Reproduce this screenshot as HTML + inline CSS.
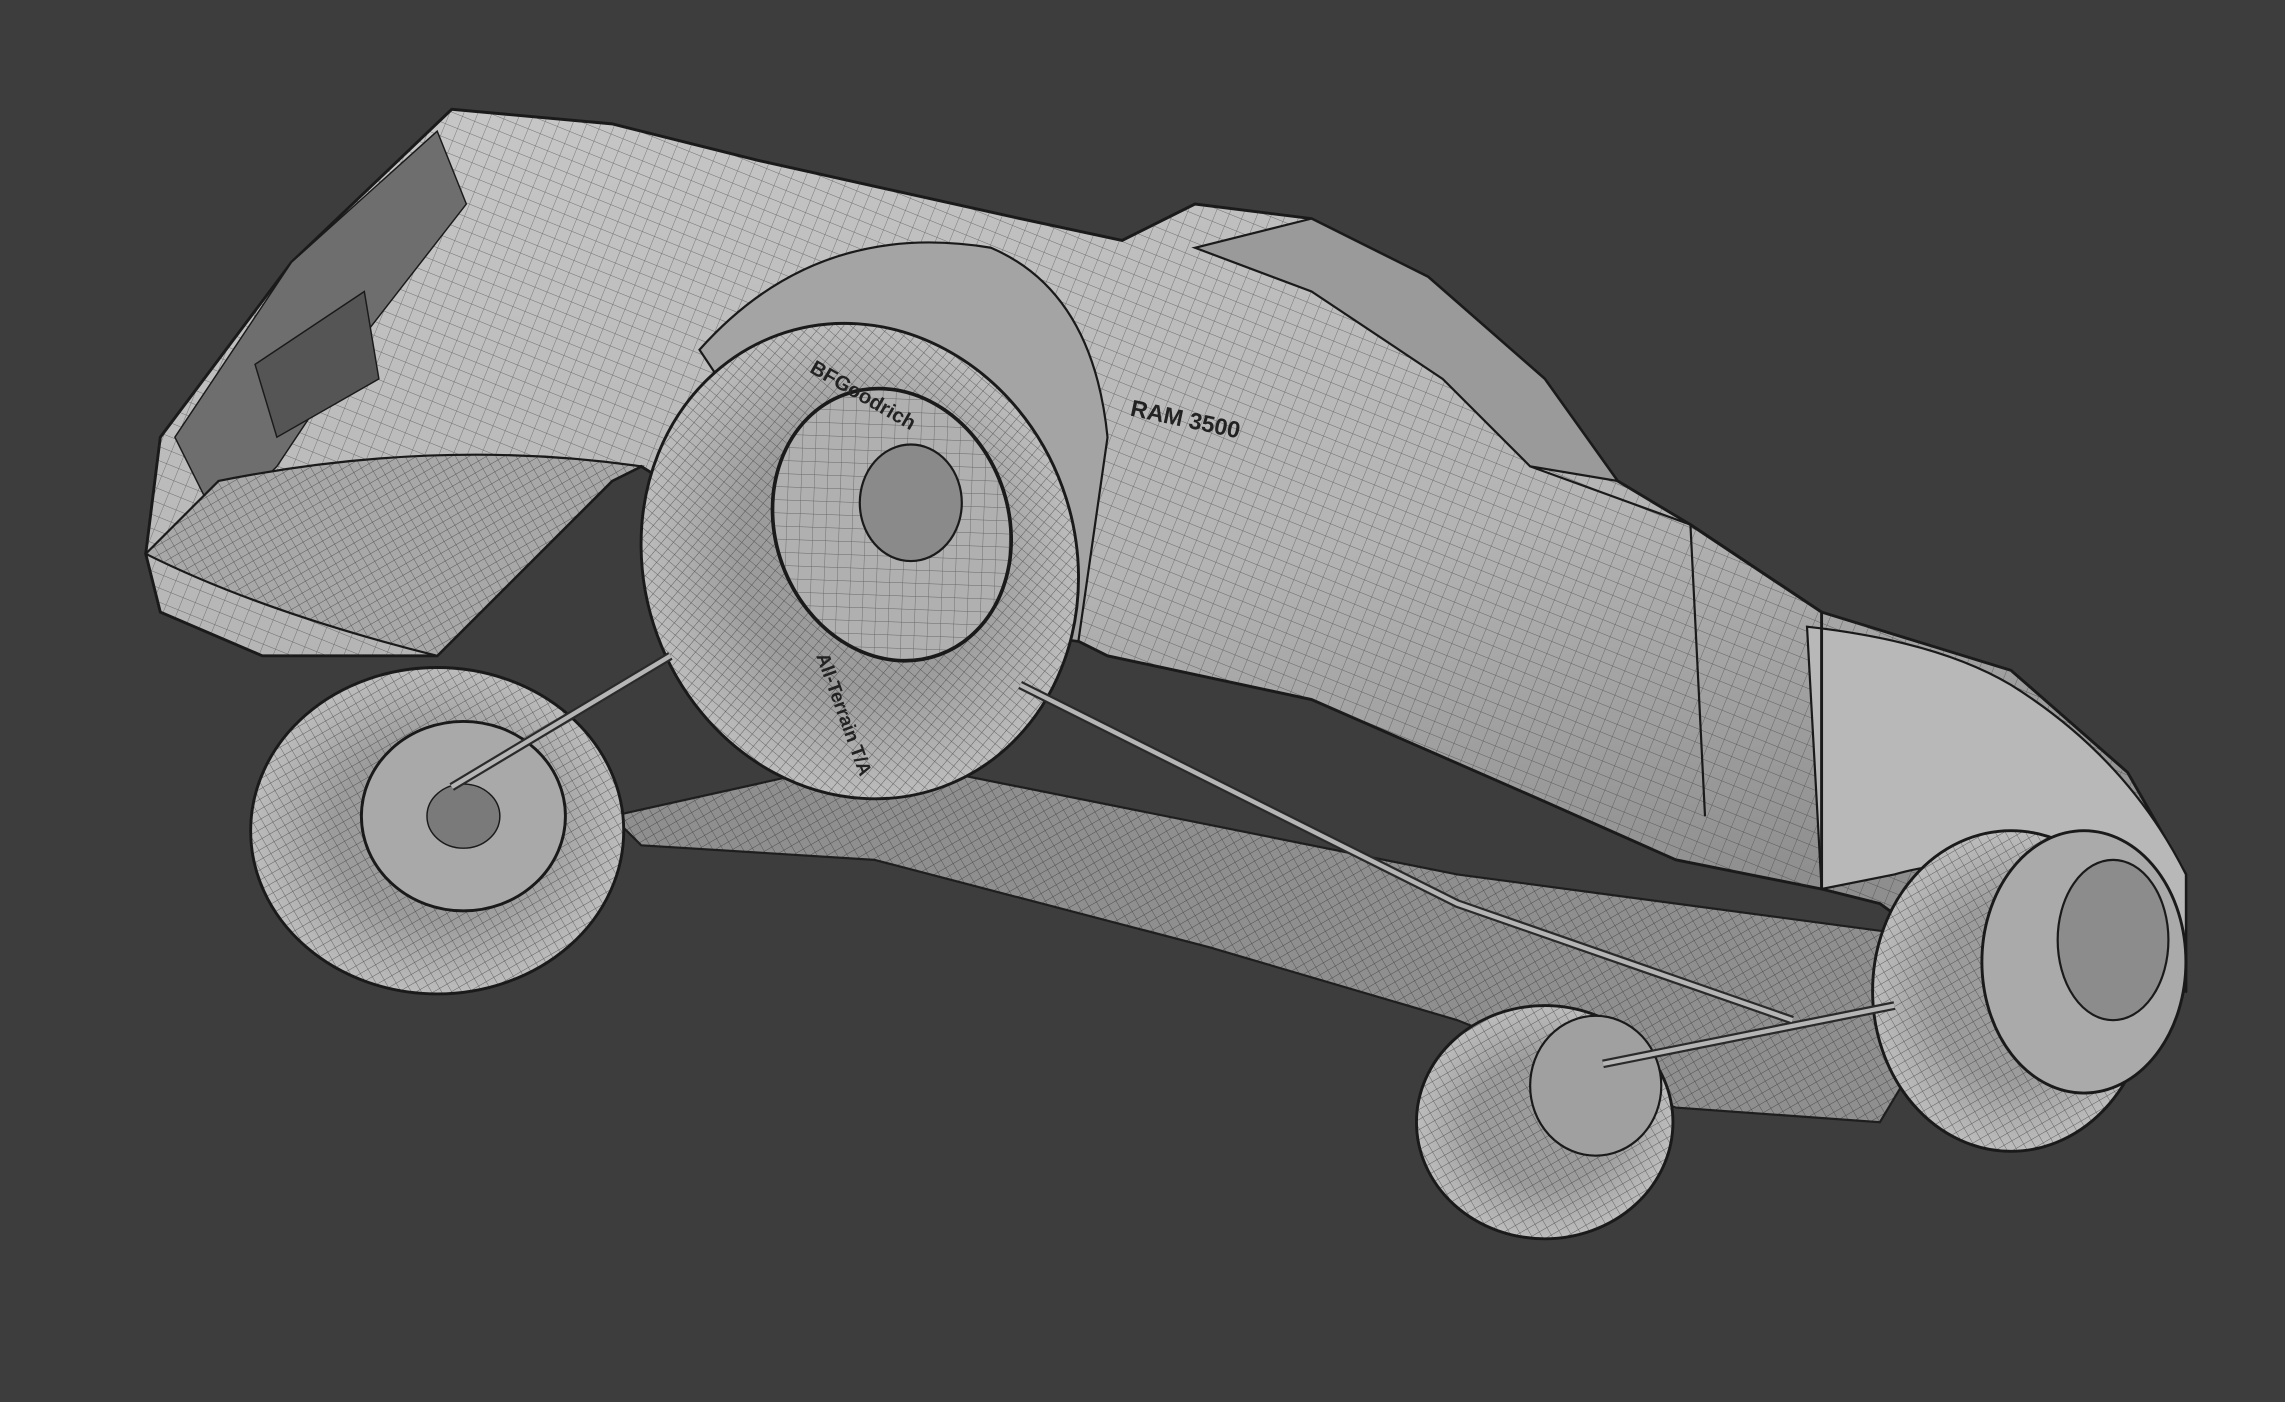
<!DOCTYPE html>
<html><head><meta charset="utf-8"><style>
html,body{margin:0;padding:0;background:#3d3d3d;width:2285px;height:1402px;overflow:hidden}
svg{display:block}
</style></head><body>
<svg width="2285" height="1402" viewBox="0 0 1568 962" preserveAspectRatio="none" xmlns="http://www.w3.org/2000/svg">
<defs>
<pattern id="g" width="9" height="9" patternUnits="userSpaceOnUse" patternTransform="rotate(22)">
<path d="M0 0H9M0 0V9" stroke="#2a2a2a" stroke-width="0.6" fill="none" opacity="0.55"/>
</pattern>
<pattern id="g2" width="6" height="6" patternUnits="userSpaceOnUse" patternTransform="rotate(-30)">
<path d="M0 0H6M0 0V6" stroke="#222" stroke-width="0.6" fill="none" opacity="0.6"/>
</pattern>
<linearGradient id="bd" x1="0" y1="0" x2="0.3" y2="1">
<stop offset="0" stop-color="#c8c8c8"/><stop offset="0.6" stop-color="#b4b4b4"/><stop offset="1" stop-color="#8e8e8e"/>
</linearGradient>
<radialGradient id="tire" cx="0.5" cy="0.5" r="0.5">
<stop offset="0.55" stop-color="#9c9c9c"/><stop offset="1" stop-color="#bdbdbd"/>
</radialGradient>
</defs>
<rect width="1568" height="962" fill="#3d3d3d"/>
<!-- chassis underside -->
<polygon points="420,560 600,520 1000,600 1300,640 1320,720 1290,770 1150,760 1000,700 830,650 600,590 440,580" fill="#8f8f8f" stroke="#1e1e1e" stroke-width="1.5"/>
<polygon points="420,560 600,520 1000,600 1300,640 1320,720 1290,770 1150,760 1000,700 830,650 600,590 440,580" fill="url(#g2)"/>
<!-- body -->
<polygon points="100,380 110,300 200,180 310,75 420,85 520,110 700,150 770,165 820,140 900,150 980,190 1060,260 1110,330 1160,360 1250,420 1380,460 1460,530 1500,600 1500,680 1400,700 1290,620 1250,610 1150,590 1060,550 900,480 760,450 740,440 600,420 440,320 420,330 300,450 180,450 110,420" fill="url(#bd)" stroke="#1a1a1a" stroke-width="2"/>
<polygon points="100,380 110,300 200,180 310,75 420,85 520,110 700,150 770,165 820,140 900,150 980,190 1060,260 1110,330 1160,360 1250,420 1380,460 1460,530 1500,600 1500,680 1400,700 1290,620 1250,610 1150,590 1060,550 900,480 760,450 740,440 600,420 440,320 420,330 300,450 180,450 110,420" fill="url(#g)"/>
<!-- cab windows -->
<polygon points="820,170 900,150 980,190 1060,260 1110,330 1050,320 990,260 900,200" fill="#9a9a9a" stroke="#1a1a1a" stroke-width="1.5"/>
<!-- grille front darker -->
<polygon points="120,300 200,180 300,90 320,140 250,230 190,320 150,360" fill="#6e6e6e" stroke="#1a1a1a"/>
<polygon points="175,250 250,200 260,260 190,300" fill="#555" stroke="#1a1a1a"/>
<!-- bumper -->
<path d="M100,380 Q180,420 300,450 L420,330 L440,320 Q300,300 150,330 Z" fill="#a8a8a8" stroke="#1a1a1a" stroke-width="1.5"/>
<path d="M100,380 Q180,420 300,450 L420,330 L440,320 Q300,300 150,330 Z" fill="url(#g2)"/>
<!-- fender arch -->
<path d="M480,240 Q560,150 680,170 Q750,200 760,300 L740,440 L600,420 Z" fill="#a4a4a4" stroke="#1a1a1a" stroke-width="1.5"/>
<!-- rear fender -->
<path d="M1240,430 Q1330,440 1380,470 Q1460,520 1500,600 L1500,680 L1420,620 Q1370,580 1300,600 L1250,610 Z" fill="#b8b8b8" stroke="#1a1a1a" stroke-width="1.5"/>
<!-- bed line -->
<path d="M1160,360 L1250,420 L1250,610" stroke="#1a1a1a" stroke-width="2" fill="none"/>
<path d="M1050,320 L1160,360 L1170,560" stroke="#1a1a1a" stroke-width="1.5" fill="none"/>
<text x="775" y="285" font-family="Liberation Sans, sans-serif" font-size="16" font-weight="bold" fill="#222" transform="rotate(12 775 285)">RAM 3500</text>
<!-- front-left wheel -->
<ellipse cx="300" cy="570" rx="128" ry="112" fill="url(#tire)" stroke="#1a1a1a" stroke-width="2"/>
<ellipse cx="300" cy="570" rx="128" ry="112" fill="url(#g2)"/>
<ellipse cx="318" cy="560" rx="70" ry="65" fill="#a9a9a9" stroke="#1a1a1a" stroke-width="2"/>
<ellipse cx="318" cy="560" rx="25" ry="22" fill="#7a7a7a" stroke="#1a1a1a"/>
<!-- big front wheel -->
<ellipse cx="590" cy="385" rx="148" ry="165" transform="rotate(-20 590 385)" fill="url(#tire)" stroke="#1a1a1a" stroke-width="2"/>
<ellipse cx="590" cy="385" rx="148" ry="165" transform="rotate(-20 590 385)" fill="url(#g2)"/>
<ellipse cx="612" cy="360" rx="80" ry="95" transform="rotate(-20 612 360)" fill="#b0b0b0" stroke="#1a1a1a" stroke-width="2.5"/>
<ellipse cx="612" cy="360" rx="80" ry="95" transform="rotate(-20 612 360)" fill="url(#g)"/>
<ellipse cx="625" cy="345" rx="35" ry="40" fill="#8a8a8a" stroke="#1a1a1a" stroke-width="1.5"/>
<text x="555" y="255" font-family="Liberation Sans, sans-serif" font-size="14" font-weight="bold" fill="#222" transform="rotate(30 555 255)">BFGoodrich</text>
<text x="560" y="450" font-family="Liberation Sans, sans-serif" font-size="13" font-weight="bold" fill="#222" transform="rotate(70 560 450)">All-Terrain T/A</text>
<!-- rear middle wheel -->
<ellipse cx="1060" cy="770" rx="88" ry="80" fill="url(#tire)" stroke="#1a1a1a" stroke-width="2"/>
<ellipse cx="1060" cy="770" rx="88" ry="80" fill="url(#g2)"/>
<ellipse cx="1095" cy="745" rx="45" ry="48" fill="#a0a0a0" stroke="#1a1a1a" stroke-width="1.5"/>
<!-- rear right duals -->
<ellipse cx="1380" cy="680" rx="95" ry="110" fill="url(#tire)" stroke="#1a1a1a" stroke-width="2"/>
<ellipse cx="1380" cy="680" rx="95" ry="110" fill="url(#g2)"/>
<ellipse cx="1430" cy="660" rx="70" ry="90" fill="#aaa" stroke="#1a1a1a" stroke-width="2"/>
<ellipse cx="1450" cy="645" rx="38" ry="55" fill="#8c8c8c" stroke="#1a1a1a" stroke-width="1.5"/>
<!-- axle / driveshaft -->
<path d="M310,540 L460,450 M700,470 L1000,620 L1230,700 M1100,730 L1300,690" stroke="#2a2a2a" stroke-width="6" fill="none"/>
<path d="M310,540 L460,450 M700,470 L1000,620 L1230,700 M1100,730 L1300,690" stroke="#b5b5b5" stroke-width="3" fill="none"/>
</svg>
</body></html>
